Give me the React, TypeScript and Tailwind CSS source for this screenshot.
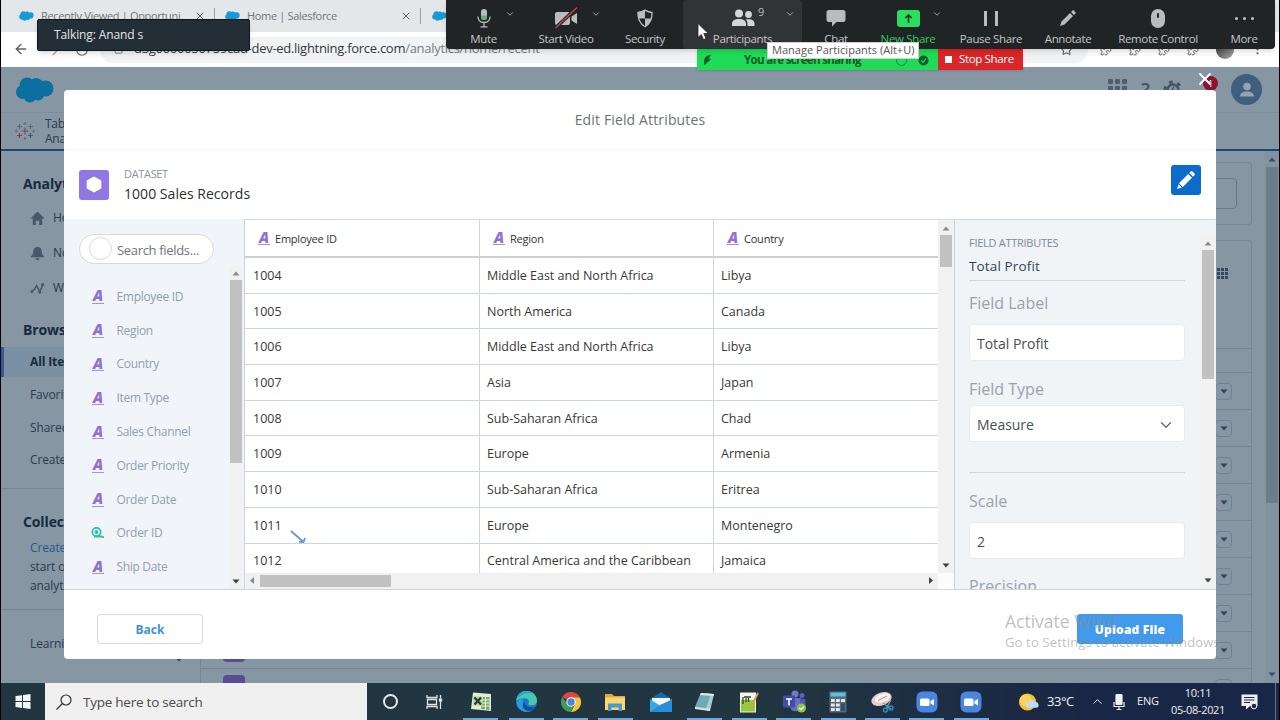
import type { ReactNode } from 'react';
import clsx from 'clsx';
import { ArrowLeft, ArrowRight, ChevronDown, ChevronUp, Lock, MoreVertical, Puzzle, RotateCw, Star, X } from 'lucide-react';

// ---------------------------------------------------------------
// DATA
// ---------------------------------------------------------------

const rows = [
  ['1004', 'Middle East and North Africa', 'Libya'],
  ['1005', 'North America', 'Canada'],
  ['1006', 'Middle East and North Africa', 'Libya'],
  ['1007', 'Asia', 'Japan'],
  ['1008', 'Sub-Saharan Africa', 'Chad'],
  ['1009', 'Europe', 'Armenia'],
  ['1010', 'Sub-Saharan Africa', 'Eritrea'],
  ['1011', 'Europe', 'Montenegro'],
  ['1012', 'Central America and the Caribbean', 'Jamaica'],
];

const fields = [
  'Employee ID',
  'Region',
  'Country',
  'Item Type',
  'Sales Channel',
  'Order Priority',
  'Order Date',
  'Order ID',
  'Ship Date',
];

// ---------------------------------------------------------------
// SMALL ICONS
// ---------------------------------------------------------------

function Cloud({ className }: { className: string }) {
  return (
    <svg viewBox="0 0 38 26" className={className} fill="currentColor">
      <circle cx="11" cy="8" r="7.5" />
      <circle cx="20" cy="8" r="7" />
      <circle cx="29.5" cy="11.5" r="8" />
      <circle cx="7" cy="15" r="7" />
      <circle cx="14" cy="19" r="6.5" />
      <circle cx="22" cy="17" r="6.5" />
    </svg>
  );
}

function Triangle({ className }: { className?: string }) {
  return (
    <svg viewBox="0 0 8 5" className={clsx('h-[5px] w-2 shrink-0', className)} fill="currentColor">
      <path d="M0.5 0.5h7L4 4.5z" />
    </svg>
  );
}

function TextFieldIcon({ className }: { className?: string }) {
  return (
    <span
      className={clsx(
        'flex h-[14px] w-3 shrink-0 items-center justify-center border-b border-[#a48fe0] pb-px text-[15px] leading-none font-extrabold text-[#8d73d2] italic',
        className,
      )}
    >
      A
    </span>
  );
}

function MeasureIcon() {
  return (
    <svg viewBox="0 0 14 12" className="h-3 w-[14px] shrink-0" fill="none" stroke="#2bbfa4" strokeWidth="1.8">
      <circle cx="5.5" cy="5" r="4.2" />
      <circle cx="5.5" cy="5" r="1" />
      <path d="M3 9.5h7l3 .8" />
    </svg>
  );
}

// ---------------------------------------------------------------
// BROWSER
// ---------------------------------------------------------------

function BrowserTab({ title, width, gap }: { title: string; width: string; gap: string }) {
  return (
    <div className={clsx('flex h-4 shrink-0 items-center border-r border-[#9a9ea2]', width)}>
      <Cloud className="h-[10px] w-[15px] shrink-0 text-[#179ad6]" />
      <span className={clsx('flex-1 text-[11px] tracking-[-0.03em] whitespace-nowrap text-[#70767b]', gap)}>{title}</span>
      <X size={12} className="mr-[8px] shrink-0 text-[#5b6064]" />
    </div>
  );
}

function BrowserChrome() {
  return (
    <div className="shrink-0">
      <div className="flex h-8 items-center bg-[#e3e7e9] pl-[18px]">
        <BrowserTab title="Recently Viewed | Opportuni" width="w-[196px]" gap="ml-[7px]" />
        <div className="w-[10px]" />
        <BrowserTab title="Home | Salesforce" width="w-[196px]" gap="ml-[7px]" />
        <div className="w-[11px]" />
        <Cloud className="h-[10px] w-[15px] text-[#179ad6]" />
      </div>
      <div className="flex h-[35px] items-center bg-white pl-3 text-[#5c6165]">
        <ArrowLeft size={16} className="-mt-[2px]" />
        <ArrowRight size={16} className="ml-4 text-[#aaa]" />
        <RotateCw size={14} className="ml-[14px]" />
        <div className="ml-[11px] flex h-[26px] w-[988px] items-center rounded-full bg-[#f1f3f4] pl-[14px]">
          <Lock size={9} className="mr-[11px] shrink-0" />
          <span className="-mt-px text-[13px] tracking-[-0.022em] whitespace-nowrap text-[#35393d]">
            d3g0000050759cau-dev-ed.lightning.force.com<span className="text-[#777c80]">/analytics/home/recent</span>
          </span>
          <Star size={13} className="mr-[15px] mb-px ml-auto" />
        </div>
        <div className="ml-[12px] flex items-center gap-[17px]">
          <Puzzle size={12} />
          <Puzzle size={12} />
          <Puzzle size={12} />
          <Puzzle size={12} />
          <div className="h-[18px] w-[18px] rounded-full bg-gradient-to-br from-[#333] to-[#aaa]" />
          <MoreVertical size={13} />
        </div>
      </div>
    </div>
  );
}

// ---------------------------------------------------------------
// SALESFORCE PAGE (dimmed behind the modal)
// ---------------------------------------------------------------

function SideLine({ children, className }: { children: ReactNode; className?: string }) {
  return <div className={clsx('flex items-center pl-[29px] whitespace-nowrap', className)}>{children}</div>;
}

function Sidebar() {
  return (
    <div className="relative w-[187px] shrink-0 overflow-hidden text-[12px] tracking-[-0.01em] text-[#2a3c4d]">
      <div className="mt-[22px] flex h-5 items-center pl-[22px] text-[14px] font-bold text-[#152b3f]">Analytics</div>
      <SideLine className="mt-[12px] h-[26px]">
        <svg viewBox="0 0 16 16" className="mr-[8px] h-[15px] w-[15px]" fill="#46586a">
          <path d="M8 0.5 15.5 8H13v7H9.8v-4.5H6.2V15H3V8H0.5z" />
        </svg>
        Home
      </SideLine>
      <SideLine className="mt-[9px] h-[26px]">
        <svg viewBox="0 0 16 16" className="mr-[8px] h-[15px] w-[15px]" fill="#46586a">
          <path d="M8 1c3 0 4.500 2 4.500 4.800 0 2.500.8 3.800 2.500 5.200v1H1v-1c1.700-1.400 2.500-2.700 2.500-5.200C3.500 3 5 1 8 1zM6 13h4c0 1.300-.8 2-2 2s-2-.7-2-2z" />
        </svg>
        Notifications
      </SideLine>
      <SideLine className="mt-[9px] h-[26px]">
        <svg viewBox="0 0 16 16" className="mr-[8px] h-[15px] w-[15px]" fill="none" stroke="#46586a" strokeWidth="1.500">
          <path d="M1.500 11.500 4.500 9l2.500-4 3.500 6.500 3-7" />
          <circle cx="13.500" cy="4" r="1" />
          <circle cx="2" cy="11.500" r="0.800" />
          <circle cx="10.500" cy="12" r="0.800" />
        </svg>
        Watchlist
      </SideLine>
      <div className="mt-[16px] flex h-6 items-center pl-[22px] text-[14px] font-bold text-[#152b3f]">Browse</div>
      <SideLine className="mt-[6px] h-[30px] border-l-[3px] border-[#275e9e] bg-[#7c90a3] !pl-[26px] font-bold text-[#152b3f]">
        All Items
      </SideLine>
      <SideLine className="mt-px h-[33px]">Favorites</SideLine>
      <SideLine className="h-[33px]">Shared with Me</SideLine>
      <SideLine className="h-[31px]">Created by Me</SideLine>
      <div className="mt-[13px] h-px bg-[#74879a]" />
      <div className="mt-[20px] flex h-6 items-center pl-[22px] text-[14px] font-bold text-[#152b3f]">Collections</div>
      <SideLine className="mt-[5px] h-[19px] text-[#22588f]">Create a collection</SideLine>
      <SideLine className="h-[19px]">start organizing your</SideLine>
      <SideLine className="h-[19px]">analytics</SideLine>
      <div className="mt-[14px] h-px bg-[#74879a]" />
      <SideLine className="mt-[22px] h-6">Learning</SideLine>
      <Triangle className="mt-px ml-[174px] text-[#32424f]" />
    </div>
  );
}

function ItemsArea() {
  return (
    <div className="flex min-w-0 flex-1 flex-col pt-[11px] pr-[13px] pl-3">
      <div className="flex h-[63px] shrink-0 justify-end rounded border border-[#74869a] pt-[15px] pr-[14px]">
        <div className="h-[31px] w-[60px] rounded border border-[#667a8f]" />
      </div>
      <div className="mt-[15px] flex-1 overflow-hidden rounded-t border border-b-0 border-[#74869a]">
        <div className="flex h-[107px] items-start justify-end pt-[27px] pr-[23px]">
          <div className="grid grid-cols-3 gap-px">
            {Array.from({ length: 9 }, (_, i) => (
              <div key={i} className="h-[3px] w-[3px] bg-[#34495e]" />
            ))}
          </div>
        </div>
        <div className="h-[25px] border-y border-[#74869a]" />
        {Array.from({ length: 9 }, (_, i) => (
          <div key={i} className="flex h-[37px] items-center justify-between border-b border-[#74869a] pr-[19px] pl-[22px]">
            <div className="h-6 w-[22px] rounded bg-[#5a4b96]" />
            <div className="flex h-[17px] w-[17px] items-center justify-center rounded-sm border border-[#708295] text-[#2f4356]">
              <Triangle />
            </div>
          </div>
        ))}
      </div>
    </div>
  );
}

function SalesforcePage() {
  return (
    <div className="flex flex-1 flex-col overflow-hidden bg-[#8696a3]">
      <div className="flex h-[46px] shrink-0 items-center justify-between border-b border-[#7d8d9b] pr-[17px] pl-[15px]">
        <Cloud className="h-[26px] w-[38px] text-[#0b6f9f]" />
        <div className="flex items-center text-[#40566b]">
          <div className="mb-[3px] grid grid-cols-3 gap-[2px]">
            {Array.from({ length: 9 }, (_, i) => (
              <div key={i} className="h-[5px] w-[5px] rounded-[1px] bg-[#4c6074]" />
            ))}
          </div>
          <span className="mr-[13px] ml-[14px] text-[19px] leading-5 font-semibold">?</span>
          <svg viewBox="0 0 20 20" className="h-5 w-5" fill="none" stroke="currentColor">
            <circle cx="10" cy="10" r="5.500" strokeWidth="2.500" />
            <circle cx="10" cy="10" r="8" strokeWidth="3" strokeDasharray="3.500 4.880" />
            <path d="M11 6.500 8.500 10.500h3L9.500 14" strokeWidth="1.300" />
          </svg>
          <div className="mb-[12px] ml-[20px] flex h-[15px] w-[15px] items-center justify-center rounded-full bg-[#8d1230] text-[9px] text-white">
            1
          </div>
          <div className="ml-[13px] flex h-[31px] w-[31px] items-center justify-center rounded-full bg-[#405f80]">
            <svg viewBox="0 0 16 16" className="h-4 w-4" fill="#93a5b5">
              <circle cx="8" cy="4.500" r="3.800" />
              <path d="M1 14.500c0-3 2.500-5 7-5s7 2 7 5z" />
            </svg>
          </div>
        </div>
      </div>
      <div className="flex h-[38px] shrink-0 items-center border-b-2 border-[#1d4778] pl-[14px]">
        <svg viewBox="0 0 20 20" className="h-5 w-5" strokeWidth="1.200">
          <path d="M10 6.500v7M6.500 10h7" stroke="#784f5d" />
          <path d="M4.500 3v5M2 5.500h5M15.500 3v5M13 5.500h5" stroke="#596c80" />
          <path d="M4.500 12v5M2 14.500h5" stroke="#8c3e4c" />
          <path d="M15.500 12v5M13 14.500h5" stroke="#40577a" />
          <path d="M10 1v3M8.500 2.500h3M10 16v3M8.500 17.500h3M1.500 8.500v3M0 10h3M18.500 8.500v3M17 10h3" stroke="#66707f" />
        </svg>
        <div className="ml-[10px] text-[12px] leading-[15px] tracking-[-0.02em] text-[#2a3c4d]">
          <div>Tableau CRM</div>
          <div>Analytics Studio</div>
        </div>
      </div>
      <div className="flex min-h-0 flex-1">
        <Sidebar />
        <ItemsArea />
        <div className="flex w-[14px] shrink-0 flex-col items-center justify-between bg-[#8392a0] py-[6px] text-[#3a4b5c]">
          <Triangle className="rotate-180" />
          <div className="mt-[5px] mb-auto h-[336px] w-[12px] bg-[#6b7d8b]" />
          <Triangle />
        </div>
      </div>
    </div>
  );
}

// ---------------------------------------------------------------
// MODAL
// ---------------------------------------------------------------

function VerticalScroll({ className, thumb }: { className: string; thumb: string }) {
  return (
    <div className={clsx('flex shrink-0 flex-col items-center bg-[#f1f1f1] py-[5px]', className)}>
      <Triangle className="rotate-180 text-[#8a8a8a]" />
      <div className={clsx('mt-[4px] w-3 shrink-0 bg-[#c1c1c1]', thumb)} />
      <Triangle className="mt-auto text-[#404040]" />
    </div>
  );
}

function FieldList() {
  return (
    <div className="flex w-[180px] shrink-0 flex-col bg-[#f1f5f9]">
      <div className="mt-[15px] ml-[15px] flex h-[30px] w-[135px] shrink-0 items-center rounded-full border border-[#d5d9de] bg-white pl-[9px]">
        <div className="mb-[2px] h-[23px] w-[23px] shrink-0 rounded-full border border-[#d5d9de]" />
        <span className="mt-[3px] ml-[5px] text-[13px] tracking-[-0.025em] whitespace-nowrap text-[#70757b]">Search fields...</span>
      </div>
      <div className="mt-[2px] flex min-h-0 flex-1">
        <div className="flex-1 pt-[14px]">
          {fields.map((name) => (
            <div key={name} className="flex h-[33.8px] items-center pl-[27px]">
              <span className="flex w-[25.5px]">{name === 'Order ID' ? <MeasureIcon /> : <TextFieldIcon className="ml-px" />}</span>
              <span className="text-[12px] tracking-[-0.026em] whitespace-nowrap text-[#919eae]">{name}</span>
            </div>
          ))}
        </div>
        <VerticalScroll className="mr-px w-[14px]" thumb="h-[183px]" />
      </div>
    </div>
  );
}

function DataTable() {
  return (
    <div className="flex w-[711px] shrink-0 flex-col border-r border-l border-[#c8d3e0] bg-white">
      <div className="flex h-[353px]">
        <div className="flex-1 overflow-hidden">
          <div className="grid h-[38px] grid-cols-[235px_234px_225px] border-b-2 border-[#cdcfd1]">
            {['Employee ID', 'Region', 'Country'].map((name) => (
              <div key={name} className="flex items-center border-r border-[#d0d5d9] pl-[13px] last:border-r-0">
                <TextFieldIcon className="mr-[5px]" />
                <span className="mt-[2px] text-[11px] tracking-[-0.02em] text-[#333]">{name}</span>
              </div>
            ))}
          </div>
          {rows.map(([id, region, country]) => (
            <div
              key={id}
              className="grid h-[35.7px] grid-cols-[235px_234px_225px] border-b border-[#cbd7d9] text-[12.5px] tracking-[-0.001em] text-[#383838]"
            >
              <div className="flex items-center border-r border-[#d0d5d9] pt-[2px] pl-2">{id}</div>
              <div className="flex items-center border-r border-[#d0d5d9] pt-[2px] pl-[7px] whitespace-nowrap">{region}</div>
              <div className="flex items-center pt-[2px] pl-[7px]">{country}</div>
            </div>
          ))}
        </div>
        <VerticalScroll className="w-[16px] pt-[6px]" thumb="h-8" />
      </div>
      <div className="flex h-[17px]">
        <div className="flex flex-1 items-center bg-[#f1f1f1] px-[3px] pb-px">
          <Triangle className="rotate-90 text-[#8a8a8a]" />
          <div className="ml-[4px] h-3 w-[131px] bg-[#c1c1c1]" />
          <Triangle className="ml-auto -rotate-90 text-[#404040]" />
        </div>
        <div className="w-[16px] bg-[#fcfcfc]" />
      </div>
    </div>
  );
}

function AttributeBox({ children }: { children: ReactNode }) {
  return (
    <div className="flex h-[37px] items-center justify-between rounded-sm border border-[#e8ebee] bg-white px-[7px] pt-[2px] text-[14px] tracking-[-0.002em] text-[#4a4f54]">
      {children}
    </div>
  );
}

function AttributePanel() {
  return (
    <div className="flex flex-1 bg-[#f0f4f7]">
      <div className="w-[230px] overflow-hidden pt-[15px] pl-[14px]">
        <div className="flex h-4 items-center text-[11px] tracking-[-0.025em] text-[#7f8a95]">FIELD ATTRIBUTES</div>
        <div className="mt-[5px] flex h-[25px] items-start border-b border-[#d0d7de] text-[13.5px] tracking-[0.01em] text-[#34434f]">
          Total Profit
        </div>
        <div className="mt-[10px] flex h-6 items-center text-[16px] text-[#9aa2aa]">Field Label</div>
        <div className="mt-[9px]">
          <AttributeBox>Total Profit</AttributeBox>
        </div>
        <div className="mt-[16px] flex h-6 items-center text-[16px] text-[#9aa2aa]">Field Type</div>
        <div className="mt-[4px]">
          <AttributeBox>
            Measure
            <ChevronDown size={18} strokeWidth={1.6} className="mr-[2px] text-[#666]" />
          </AttributeBox>
        </div>
        <div className="mt-[30px] h-px bg-[#d0d7de]" />
        <div className="mt-[16px] flex h-6 items-center text-[16px] text-[#9aa2aa]">Scale</div>
        <div className="mt-[9px]">
          <AttributeBox>2</AttributeBox>
        </div>
        <div className="mt-[15px] flex h-6 items-center text-[16px] text-[#9aa2aa]">Precision</div>
      </div>
      <VerticalScroll className="mt-[16px] ml-[15px] w-[16px] !pb-[6px]" thumb="h-[129px]" />
    </div>
  );
}

function EditFieldModal() {
  return (
    <div className="absolute top-[90px] left-[64px] flex h-[569px] w-[1152px] flex-col overflow-hidden rounded bg-white">
      <div className="flex h-[60px] shrink-0 items-center justify-center border-b border-[#f4f4f4] text-[14px] tracking-[0.01em] text-[#6d7278]">
        Edit Field Attributes
      </div>
      <div className="flex h-[69px] shrink-0 items-center pr-[15px] pl-[15px]">
        <div className="flex h-[30px] w-[30px] items-center justify-center rounded-[3px] bg-[#9077e4]">
          <svg viewBox="0 0 16 17" className="h-[17px] w-4" fill="#fff">
            <path d="M8 0.500 15.300 4.500v8L8 16.500.7 12.500v-8z" />
          </svg>
        </div>
        <div className="ml-[15px] pt-px">
          <div className="text-[11px] leading-[16px] tracking-[-0.03em] text-[#8d949b]">DATASET</div>
          <div className="text-[14px] leading-[23px] tracking-[0.003em] text-[#2c2f31]">1000 Sales Records</div>
        </div>
        <div className="mb-[9px] ml-auto flex h-[30px] w-[30px] items-center justify-center rounded-[3px] bg-[#0b6ccb]">
          <svg viewBox="0 0 20 20" className="h-5 w-5" fill="#fff">
            <path d="M12.200 4 16 7.800 6.800 17 3 13.200z" />
            <path d="M2.600 14.200 5.800 17.400 1 19z" />
            <path d="M13.200 3l1.500-1.500c.5-.5 1.300-.5 1.800 0l2 2c.5.5.5 1.300 0 1.800L17 6.800z" />
          </svg>
        </div>
      </div>
      <div className="flex h-[371px] shrink-0 border-b border-[#ccd4dd]">
        <FieldList />
        <div className="flex flex-1 border-t border-[#d3d8dd]">
          <DataTable />
          <AttributePanel />
        </div>
      </div>
      <div className="flex flex-1 items-center justify-between pt-[9px] pr-[33px] pl-[33px]">
        <button className="mb-px h-[30px] w-[106px] rounded-[3px] border border-[#d6dae0] bg-white pt-[3px] text-[12px] font-bold text-[#4492d2]">
          Back
        </button>
        <button className="mb-px h-[30px] w-[106px] rounded-[3px] bg-[#429aec] pt-[3px] text-[12px] font-extrabold tracking-[0.015em] text-white">
          Upload File
        </button>
      </div>
    </div>
  );
}

// ---------------------------------------------------------------
// ZOOM CONTROLS
// ---------------------------------------------------------------

function ZoomItem({ label, width, caret, green, children }: { label: string; width: string; caret?: string; green?: boolean; children: ReactNode }) {
  return (
    <div className={clsx('relative flex h-full shrink-0 flex-col items-center', width)}>
      <div className="mt-[7px] flex h-[22px] items-center justify-center text-[#b9bbbc]">{children}</div>
      <span
        className={clsx(
          'mt-[2px] text-[11.5px] leading-4 tracking-[-0.03em] whitespace-nowrap',
          green ? 'text-[#2dcf5e]' : 'text-[#c4c6c7]',
        )}
      >
        {label}
      </span>
      {caret && <ChevronDown size={10} className={clsx('absolute top-[9px] text-[#b9bbbc]', caret)} />}
    </div>
  );
}

function ZoomToolbar() {
  return (
    <div className="absolute top-0 left-[446px] flex h-[49px] w-[829px] rounded-b bg-[#202425] shadow-md">
      <ZoomItem label="Mute" width="w-[75px]" caret="left-[59px]">
        <svg viewBox="0 0 14 20" className="h-5 w-[14px]" fill="none" stroke="currentColor" strokeWidth="1.300">
          <rect x="4" y="1" width="6" height="11" rx="3" fill="#b9bbbc" stroke="none" />
          <path d="M4 7.500h6V9a3 3 0 0 1-6 0z" fill="#5fb579" stroke="none" />
          <path d="M1 8.500c0 4 2 6 6 6s6-2 6-6M7 14.500v4M3.500 18.800h7" />
        </svg>
      </ZoomItem>
      <ZoomItem label="Start Video" width="w-[90px]" caret="left-[70px]">
        <svg viewBox="0 0 24 22" className="h-[22px] w-6" fill="currentColor">
          <rect x="1" y="5" width="15" height="13" rx="2" />
          <path d="M17.500 9.500 23 6v11l-5.500-3.500z" />
          <path d="M1.500 21 23 0.500" stroke="#202425" strokeWidth="3.500" />
          <path d="M1.500 21 23 0.500" stroke="#b84a56" strokeWidth="1.400" />
        </svg>
      </ZoomItem>
      <ZoomItem label="Security" width="w-[68px]">
        <svg viewBox="0 0 18 20" className="h-[19px] w-[18px]" fill="none" stroke="currentColor" strokeWidth="1.400">
          <path d="M9 1.200c2.500 1.500 4.500 2.200 7.500 2.500 0 7-1.500 11.500-7.500 15-6-3.500-7.500-8-7.500-15C4.500 3.400 6.500 2.700 9 1.200z" />
          <path d="M9 1v9H1.700C1.400 8 1.500 6 1.500 3.700 4.500 3.400 6.500 2.500 9 1zM9 10h7.200C15.200 14 13 16.500 9 19z" fill="currentColor" stroke="none" />
        </svg>
      </ZoomItem>
      <div className="ml-[4px] rounded bg-[#303435]">
        <ZoomItem label="Participants" width="w-[119px]" caret="left-[102px]">
          <svg viewBox="0 0 24 18" className="h-[18px] w-6" fill="#d4d5d6">
            <circle cx="8" cy="4.500" r="4" />
            <path d="M1 17v-2c0-3.500 2.500-5 7-5s7 1.500 7 5v2z" />
            <circle cx="17.500" cy="5.500" r="3.400" />
            <path d="M16 10.300c4.500-.7 7.500 1 7.500 4.200V17H16.500v-2c0-2-.7-3.400-1.800-4.400z" />
          </svg>
          <span className="absolute top-[4px] left-[75px] text-[11px] leading-4">9</span>
        </ZoomItem>
      </div>
      <ZoomItem label="Chat" width="w-[68px]">
        <svg viewBox="0 0 20 18" className="h-[18px] w-5" fill="currentColor">
          <path d="M3 1h14a2.500 2.500 0 0 1 2.500 2.500v7A2.500 2.500 0 0 1 17 13h-6.500L6 17.500V13H3A2.500 2.500 0 0 1 .5 10.500v-7A2.500 2.500 0 0 1 3 1z" />
        </svg>
      </ZoomItem>
      <ZoomItem label="New Share" width="w-[76px]" caret="left-[62px]" green>
        <div className="flex h-[17px] w-[23px] items-center justify-center rounded-[3px] bg-[#2adf60]">
          <svg viewBox="0 0 10 12" className="h-[11px] w-[9px]" fill="none" stroke="#173a22" strokeWidth="1.800">
            <path d="M5 11V2M1.500 5.500 5 2l3.500 3.500" />
          </svg>
        </div>
      </ZoomItem>
      <ZoomItem label="Pause Share" width="w-[90px]">
        <div className="flex h-[15px] gap-[8px]">
          <div className="w-[3px] bg-[#b9bbbc]" />
          <div className="w-[3px] bg-[#b9bbbc]" />
        </div>
      </ZoomItem>
      <ZoomItem label="Annotate" width="w-[64px]">
        <svg viewBox="0 0 18 18" className="h-[18px] w-[18px]" fill="currentColor">
          <path d="M11 4 14 7 5.500 15.500 1 17l1.500-4.500zM12 3l1.300-1.300c.5-.5 1.200-.5 1.700 0L16.300 3c.5.5.5 1.200 0 1.700L15 6z" />
        </svg>
      </ZoomItem>
      <ZoomItem label="Remote Control" width="w-[116px]">
        <div className="flex h-[19px] w-[14px] justify-center rounded-full bg-[#b9bbbc] pt-[4px]">
          <div className="h-[5px] w-[2px] rounded bg-[#202425]" />
        </div>
      </ZoomItem>
      <ZoomItem label="More" width="w-[56px]">
        <div className="flex gap-[5px]">
          <div className="h-[3px] w-[3px] rounded-full bg-[#c4c6c7]" />
          <div className="h-[3px] w-[3px] rounded-full bg-[#c4c6c7]" />
          <div className="h-[3px] w-[3px] rounded-full bg-[#c4c6c7]" />
        </div>
      </ZoomItem>
    </div>
  );
}

function ShareBar() {
  return (
    <div className="absolute top-[48px] left-[697px] flex h-[22px] w-[326px] text-[11.5px] shadow-sm">
      <div className="flex w-[241px] items-center bg-[#20db58] pt-[2px] pl-[6px] text-[#0f5a26]">
        <svg viewBox="0 0 8 10" className="h-[10px] w-2" fill="currentColor">
          <path d="M7.500 0.300 5 4.200H7.500L1.500 9.800V5.500C1.500 2.500 4 .8 7.500.3z" stroke="currentColor" strokeWidth="0.600" />
        </svg>
        <span className="ml-[33px] w-[118px] tracking-[-0.055em] whitespace-nowrap font-bold">You are screen sharing</span>
        <div className="ml-[34px] h-[11px] w-[11px] rounded-full border border-[#128a38]" />
        <svg viewBox="0 0 12 12" className="ml-[11px] h-[11px] w-[11px]">
          <circle cx="6" cy="6" r="5.500" fill="#0f5a26" />
          <path d="M3.500 6 5.500 8l3.500-4" stroke="#20db58" strokeWidth="1.400" fill="none" />
        </svg>
      </div>
      <div className="flex flex-1 items-center bg-[#dc2527] pl-[7px] tracking-[-0.03em] text-white">
        <div className="mr-[7px] h-[7px] w-[7px] bg-white" />
        Stop Share
      </div>
    </div>
  );
}

// ---------------------------------------------------------------
// WINDOWS TASKBAR
// ---------------------------------------------------------------

function ZoomAppIcon() {
  return (
    <svg viewBox="0 0 22 22" className="h-[22px] w-[22px]">
      <rect x="0.500" y="0.500" width="21" height="21" rx="6" fill="#4a86e0" />
      <rect x="4" y="7.500" width="9.500" height="7.500" rx="1.500" fill="#fff" />
      <path d="M14.500 10 18 8v6.500l-3.500-2z" fill="#fff" />
    </svg>
  );
}

const apps: { name: string; open: boolean; spacing?: string; icon: ReactNode }[] = [
  {
    name: 'cortana',
    open: false,
    spacing: 'ml-px',
    icon: <div className="h-[15px] w-[15px] rounded-full border-2 border-[#e6eaec]" />,
  },
  {
    name: 'task view',
    open: false,
    icon: (
      <svg viewBox="0 0 18 16" className="h-4 w-[18px]" fill="none" stroke="#dfe4e6" strokeWidth="1.300">
        <path d="M1 1v2.500h10V1M1 15v-2.500h10V15M1.500 5.500h9v5h-9zM14.500 1v3M14.500 7.500v7.500" />
        <rect x="13.500" y="5" width="2" height="2" fill="#dfe4e6" />
      </svg>
    ),
  },
  {
    name: 'excel',
    open: true,
    spacing: 'ml-[2px]',
    icon: (
      <svg viewBox="0 0 22 22" className="h-[22px] w-[22px]">
        <path d="M3 1.500 21 3v17L1 18z" fill="#e1eed2" />
        <path d="M13 6h6.500v13l-8.500-1z" fill="#7ba768" />
        <path d="M12 9h7.500M12 12h7.500M12 15h7.500M15.500 6v13" stroke="#f4f9ee" strokeWidth="1" />
        <path d="M3 5.500h9.500v9H3z" fill="#b7d39f" />
        <path d="M4.500 6.500 11 13.500M11 6.500 4.500 13.500" stroke="#23402a" strokeWidth="2.200" />
      </svg>
    ),
  },
  {
    name: 'edge',
    open: true,
    spacing: 'ml-px',
    icon: (
      <svg viewBox="0 0 24 24" className="h-[23px] w-[23px]">
        <circle cx="12" cy="12" r="11" fill="#1b78c9" />
        <path d="M1.500 10C2.500 4 7 1 12 1c6.500 0 11 5 11 10 0 3.500-3 5-6 5-2 0-3.500-1-3-2 1.500-2.500 0-5.500-4-5.500-3.500 0-7 1-8.500 3z" fill="#44c9ae" />
        <path d="M1.500 10C3 4 7 1 12 1c3 0 5.500 1 7 2.500C12 2 4 6 1.500 10z" fill="#2aa3dc" />
        <path d="M9 10c-2 4 0 11 8 12-9 3-15-3-15-9 1-3 4-4.500 7-3z" fill="#2a9be6" />
        <path d="M10 12c-1 4 4 7.500 11 5.500-3 5-8.500 4.500-10.500 3-3-2-3-6-.5-8.500z" fill="#134d91" />
      </svg>
    ),
  },
  {
    name: 'chrome',
    open: true,
    icon: (
      <svg viewBox="0 0 24 24" className="h-[22px] w-[22px]">
        <path d="M12 12 2.500 6.500a11 11 0 0 1 19 0z" fill="#dc4a3d" />
        <path d="M12 12V7h9.800A11 11 0 0 1 12 23l4-8z" fill="#f4c63b" />
        <path d="M12 12l3.500 3L12 23A11 11 0 0 1 2.500 6.500L8 14z" fill="#3f9c58" />
        <circle cx="12" cy="12" r="5.200" fill="#f2f5f6" />
        <circle cx="12" cy="12" r="4" fill="#4a86e3" />
      </svg>
    ),
  },
  {
    name: 'explorer',
    open: true,
    icon: (
      <svg viewBox="0 0 22 20" className="h-5 w-[22px]">
        <path d="M1 2h7l2 2h11v14H1z" fill="#e6a935" />
        <path d="M1 5.500h20V18H1z" fill="#f8d577" />
        <path d="M4 19v-7.500h14V19h-3.500v-3.500h-7V19z" fill="#4f97c7" />
      </svg>
    ),
  },
  {
    name: 'mail',
    open: false,
    spacing: 'ml-px',
    icon: (
      <svg viewBox="0 0 24 22" className="h-[22px] w-6">
        <path d="M1 8 12 1l11 7v13H1z" fill="#1669ad" />
        <path d="M3 7h18v8H3z" fill="#f2f7fa" />
        <path d="M1 8.500 12 15l11-6.500V21H1z" fill="#3aa8e4" />
        <path d="M1 21 12 13.500 23 8.500V21z" fill="#2590d7" />
      </svg>
    ),
  },
  {
    name: 'notepad',
    open: true,
    icon: (
      <svg viewBox="0 0 22 22" className="h-[22px] w-[22px]">
        <path d="M7 2 20 3 16 20 1 17z" fill="#a9ccd2" />
        <path d="M7 2 17 3 12 17 1 16z" fill="#6faab1" />
        <path d="M7 2 20 3l-.5 2L6 4zM1 16l13 2 2-2v4L1 18z" fill="#dfe7e6" />
      </svg>
    ),
  },
  {
    name: 'notepad++',
    open: true,
    icon: (
      <svg viewBox="0 0 22 22" className="h-[22px] w-[22px]">
        <rect x="2" y="1.500" width="16" height="20" fill="#f3f5e7" />
        <path d="M3 9h14v11.500H3z" fill="#94c83d" />
        <path d="M5 6v7M6 6h7M8 7v4M10.500 7v4" stroke="#33422c" strokeWidth="1.300" />
        <path d="M20 2 14 14l-1.500 3" stroke="#d6a04b" strokeWidth="2" />
      </svg>
    ),
  },
  {
    name: 'teams',
    open: true,
    icon: (
      <svg viewBox="0 0 24 23" className="h-[23px] w-6">
        <circle cx="13" cy="4" r="3.500" fill="#7378cf" />
        <circle cx="20" cy="5.500" r="2.500" fill="#5a62c3" />
        <path d="M8 8h11v8c0 7-11 7-11 0z" fill="#686dc9" />
        <path d="M18 9h5.500v6c0 4-5.500 5-5.500 1z" fill="#4f57b3" />
        <rect x="1" y="5.500" width="12" height="12" rx="1" fill="#444caa" />
        <path d="M4 9h6M7 9v6.500" stroke="#fff" strokeWidth="1.600" />
        <circle cx="19.500" cy="18" r="4.500" fill="#8fc63e" />
        <path d="M17.300 18 19 19.700l2.700-3" stroke="#fff" strokeWidth="1.200" fill="none" />
      </svg>
    ),
  },
  {
    name: 'calculator',
    open: true,
    icon: (
      <svg viewBox="0 0 18 22" className="h-[22px] w-[18px]">
        <rect x="0.500" y="0.500" width="17" height="21" fill="#5a6975" />
        <path d="M1.500 1.500h15v4h-15z" fill="#59bfe2" />
        <path d="M2 8h3.800v3H2zM7 8h3.800v3H7zM2 12.500h3.800v3H2zM7 12.500h3.800v3H7zM2 17h3.800v3H2zM7 17h3.800v3H7z" fill="#e5e8ea" />
        <path d="M12 8h4v3h-4z" fill="#e5e8ea" />
        <path d="M12 12.500h4V20h-4z" fill="#1e5578" />
      </svg>
    ),
  },
  {
    name: 'snipping tool',
    open: true,
    icon: (
      <svg viewBox="0 0 24 22" className="h-[22px] w-6">
        <ellipse cx="11.500" cy="8" rx="10.500" ry="6.500" fill="#e3cdcb" transform="rotate(-20 11.500 8)" />
        <ellipse cx="12.500" cy="7" rx="8" ry="4" fill="#fbf2ee" transform="rotate(-20 12.500 7)" />
        <path d="M8 9.500 17 5" stroke="#b98283" strokeWidth="1" />
        <path d="M21 9 16 18M13 12l8 6" stroke="#7f9aa8" strokeWidth="1.300" />
        <circle cx="15.500" cy="19" r="2" fill="none" stroke="#2b87bf" strokeWidth="1.500" />
        <circle cx="21" cy="17" r="2" fill="none" stroke="#2b87bf" strokeWidth="1.500" />
      </svg>
    ),
  },
  { name: 'zoom', open: true, icon: <ZoomAppIcon /> },
  { name: 'zoom meeting', open: true, icon: <ZoomAppIcon /> },
];

function Taskbar() {
  return (
    <div className="flex h-[37px] shrink-0 bg-gradient-to-r from-[#213640] from-60% to-[#1a2645] to-85%">
      <div className="flex w-[44px] items-center justify-center">
        <svg viewBox="0 0 16 16" className="h-[15px] w-4" fill="#f3f5f6">
          <path d="M0 2.200 7 1.200v6.300H0zM8 1.100 16 0v7.500H8zM0 8.500h7v6.300l-7-1zM8 8.500h8V16l-8-1.100z" />
        </svg>
      </div>
      <div className="flex w-[322px] items-center bg-[#f0f0f0] pl-[11px]">
        <svg viewBox="0 0 16 16" className="h-4 w-4" fill="none" stroke="#333" strokeWidth="1.200">
          <circle cx="10" cy="6" r="5" />
          <path d="M6.500 9.500 0.500 15.500" />
        </svg>
        <span className="mt-px ml-[11px] text-[13.5px] tracking-[-0.018em] text-[#4a4a4a]">Type here to search</span>
      </div>
      <div className="flex">
        {apps.map((app) => (
          <div key={app.name} className={clsx('flex w-[44.4px] flex-col items-center', app.spacing)}>
            <div className="flex h-[35px] items-center pt-[2px]">{app.icon}</div>
            {app.open && <div className="h-[2px] w-[35px] bg-[#70aadb]" />}
          </div>
        ))}
      </div>
      <div className="ml-auto flex items-center text-[12px] text-[#eef1f4]">
        <svg viewBox="0 0 22 20" className="h-5 w-[21px]">
          <circle cx="10" cy="10" r="9" fill="#f5bf3c" />
          <circle cx="8" cy="8" r="6" fill="#fad35d" />
          <path d="M10 16a3 3 0 0 1 1-5.800 4 4 0 0 1 7-.2 3 3 0 0 1 1 6z" fill="#bcdcf1" />
        </svg>
        <span className="ml-[8px] w-[28px] text-[13px] tracking-[-0.035em] whitespace-nowrap">33°C</span>
        <ChevronUp size={15} strokeWidth={1.600} className="ml-[15px]" />
        <svg viewBox="0 0 12 16" className="ml-[8px] h-4 w-3" fill="none" stroke="currentColor" strokeWidth="1.200">
          <rect x="3" y="0.500" width="6" height="10" rx="1" fill="currentColor" />
          <path d="M1 8v4.500h10V8M6 12.500v3M3.500 15.500h5" />
        </svg>
        <span className="ml-[12px] w-[23px] text-[11px] tracking-[-0.02em]">ENG</span>
        <div className="ml-[9px] w-[58px] text-center text-[11px] leading-[16.500px] tracking-[-0.03em] whitespace-nowrap">
          <div>10:11</div>
          <div>05-08-2021</div>
        </div>
        <svg viewBox="0 0 17 16" className="ml-[14px] h-4 w-[17px]" fill="#eef1f4">
          <path d="M0.500 0.500h16V12H9l-4 3.500V12H.5z" />
          <path d="M3 3.500h10.500M3 6h10.500M3 8.500h6" stroke="#1a2645" strokeWidth="1" />
          <circle cx="13" cy="12" r="2.800" fill="#1a2645" stroke="#eef1f4" />
        </svg>
        <div className="ml-[17px] h-[37px] w-px bg-[#66708a]" />
        <div className="w-[3px]" />
      </div>
    </div>
  );
}

// ---------------------------------------------------------------
// APP
// ---------------------------------------------------------------

function App() {
  return (
    <div className="relative flex h-[720px] w-[1280px] flex-col overflow-hidden border-x border-black bg-black font-['Open_Sans','Noto_Sans',sans-serif]">
      <BrowserChrome />
      <SalesforcePage />
      <Taskbar />

      {/* Everything below floats over the desktop */}
      <div className="absolute inset-y-0 -left-px w-[1280px]">
        <EditFieldModal />
        <X size={20} strokeWidth={2.200} className="absolute top-[69px] left-[1195px] text-white" />

        {/* Pen mark over the table */}
        <svg viewBox="0 0 17 15" className="absolute top-[529px] left-[290px] h-[15px] w-[17px]" fill="none" stroke="#6a93d8" strokeWidth="1.800">
          <path d="M1 2 13.500 13M9 12.800l4.500.2 1.500-4" />
        </svg>

        {/* Windows activation watermark */}
        <div className="absolute top-[609px] left-[1005px] w-[212px] overflow-hidden whitespace-nowrap text-[#8a8a8a]/55">
          <div className="text-[17.500px] leading-6">Activate Wind</div>
          <div className="text-[13px] leading-[19px] tracking-[0.012em]">Go to Settings to activate Windows.</div>
        </div>

        <ShareBar />
        <ZoomToolbar />
        <div className="absolute top-[42px] left-[767px] flex h-[17px] w-[152px] items-center border border-[#d0d0d0] bg-white pl-[4px] text-[11px] tracking-[0.002em] whitespace-nowrap text-[#555]">
          Manage Participants (Alt+U)
        </div>
        <svg viewBox="0 0 12 18" className="absolute top-[22px] left-[697px] h-[19px] w-3">
          <path d="M1 1v14l3.300-3 2.200 5 2.500-1-2.200-5h4.500z" fill="#fff" stroke="#222" strokeWidth="0.800" />
        </svg>
        <div className="absolute top-[19px] left-[37px] flex h-[32px] w-[213px] items-center rounded-[2px] border border-[#10171d] bg-[#232e37] pl-[16px] text-[12px] tracking-[-0.01em] text-[#e4e7e9] shadow-md">
          Talking: Anand s
        </div>
      </div>
    </div>
  );
}

export default App;
